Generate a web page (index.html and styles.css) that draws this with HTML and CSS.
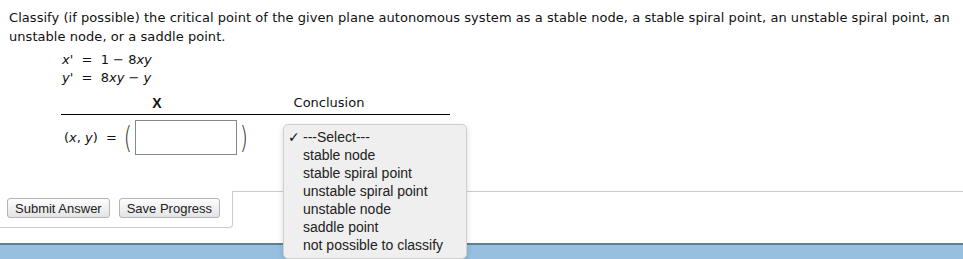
FILE: index.html
```html
<!DOCTYPE html>
<html lang="en">
    <head>
        <meta charset="UTF-8">
        <title>Classify the critical point</title>
        <link rel="stylesheet" href="styles.css">
    </head>
    <body>
        <div class="question">
            <p class="prompt">Classify (if possible) the critical point of the given plane autonomous system as a stable node, a stable spiral point, an unstable spiral point, an unstable node, or a saddle point.</p>
            <div class="system">
                <div><i>x</i>' &nbsp;= &nbsp;1 &minus; 8<i>xy</i></div>
                <div><i>y</i>' &nbsp;= &nbsp;8<i>xy</i> &minus; <i>y</i></div>
            </div>
            <div class="answer">
                <div class="head">
                    <div class="col-x"><b>X</b></div>
                    <div class="col-c">Conclusion</div>
                </div>
                <div class="row">
                    <div class="col-x point">
                        <span>(<i>x</i>, <i>y</i>) &nbsp;=</span>
                        <span class="paren">(</span>
                        <input type="text" class="box">
                        <span class="paren">)</span>
                    </div>
                    <div class="col-c pick">
                        <!-- the select is open, its list lies over the page -->
                        <ul class="menu">
                            <li class="on"><span class="tick">&#10003;</span>---Select---</li>
                            <li>stable node</li>
                            <li>stable spiral point</li>
                            <li>unstable spiral point</li>
                            <li>unstable node</li>
                            <li>saddle point</li>
                            <li>not possible to classify</li>
                        </ul>
                    </div>
                </div>
            </div>
        </div>
        <div class="actions">
            <div class="tab">
                <button>Submit Answer</button>
                <button>Save Progress</button>
            </div>
            <div class="rest"></div>
        </div>
        <div class="footer"></div>
    </body>
</html>
```

FILE: styles.css
```css
body {
    margin: 0;
    background: #fff;
    color: #111;
    font-family: "DejaVu Sans", Verdana, sans-serif;
    font-size: 13px;
}

.question {
    padding: 8px 0 0 9px;
}

.prompt {
    margin: 0;
    line-height: 19px;
    letter-spacing: 0.05px;
}

.system {
    margin: 5px 0 0 53px;
    line-height: 18px;
}

.answer {
    margin: 7px 0 0 52px;
    width: 389px;
}

.head {
    display: flex;
    border-bottom: 1px solid #000;
    line-height: 18px;
    padding-bottom: 1px;
}

.col-x {
    width: 192px;
}

.col-c {
    width: 152px;
}

.head .col-x,
.head .col-c {
    text-align: center;
}

.head b {
    font-family: "Liberation Sans", Arial, sans-serif;
    font-size: 14px;
}

.row {
    display: flex;
    margin-top: 5px;
}

.point {
    display: flex;
    align-items: center;
    padding-left: 3px;
}

.paren {
    font-size: 30px;
    font-weight: 100;
    color: #333;
    margin: 0 1px 0 5px;
    transform: scaleX(0.7);
}

.paren + .box + .paren {
    margin: 0 0 0 1px;
}

.box {
    width: 100px;
    height: 33px;
    margin: 0;
    padding: 0;
    border: 1px solid #888;
}

.pick {
    position: relative;
    margin-left: 30px;
}

.menu {
    position: absolute;
    top: 4px;
    left: -3px;
    width: 182px;
    margin: 0;
    padding: 3px 0 4px;
    list-style: none;
    background: #efefef;
    border: 1px solid #cfcfcf;
    border-radius: 5px;
    box-shadow: 0 2px 6px rgba(0, 0, 0, 0.15);
    font-family: "Liberation Sans", Arial, sans-serif;
    font-size: 14px;
    line-height: 18px;
    color: #222;
}

.menu li {
    padding-left: 19px;
    position: relative;
}

.tick {
    position: absolute;
    left: 4px;
    font-family: "DejaVu Sans", sans-serif;
    font-size: 14px;
    font-weight: bold;
    color: #111;
}

.actions {
    display: flex;
    margin-top: 36px;
}

.tab {
    width: 233px;
    height: 37px;
    border-right: 1px solid #ccc;
    border-bottom: 1px solid #ccc;
    border-bottom-right-radius: 4px;
    padding: 7px 0 0 7px;
    box-sizing: border-box;
    display: flex;
    align-items: flex-start;
    gap: 9px;
}

.tab button {
    font-family: "Liberation Sans", Arial, sans-serif;
    font-size: 13px;
    height: 20px;
    padding: 0 7px;
    color: #222;
    background: linear-gradient(#fdfdfd, #e4e4e4);
    border: 1px solid #b5b5b5;
    border-radius: 3px;
}

.rest {
    flex: 1;
    border-top: 1px solid #ccc;
}

.footer {
    margin-top: 15px;
    height: 16px;
    border-top: 2px solid #5f7f90;
    background: #97bfe0;
}
```
